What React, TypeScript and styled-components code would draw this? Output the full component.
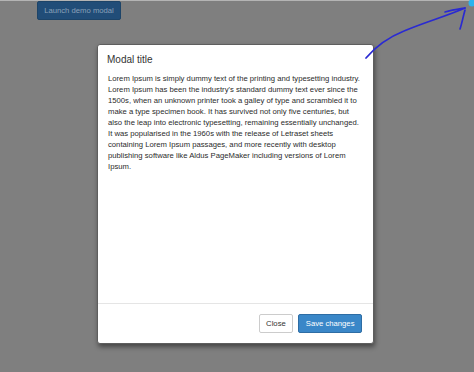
import React from "react";
import styled, { createGlobalStyle } from "styled-components";

const GlobalStyle = createGlobalStyle`
  html, body { margin: 0; padding: 0; }
  body {
    background: #7f7f7f;
    font-family: "Liberation Sans", Arial, sans-serif;
    color: #333;
    overflow: hidden;
  }
`;

const Page = styled.div`
  position: relative;
  width: 474px;
  height: 372px;
  background: #7f7f7f;
  overflow: hidden;
`;

const TopStrip = styled.div`
  height: 1px;
  background: #b4b4b4;
`;

const Toolbar = styled.div`
  display: flex;
  padding-left: 37px;
`;

const LaunchButton = styled.button`
  height: 19px;
  width: 84px;
  padding: 0;
  border: 1px solid #1d4468;
  border-radius: 2px;
  background: #214d78;
  color: #8aa1b8;
  font-family: "Liberation Sans", Arial, sans-serif;
  font-size: 7.7px;
  line-height: 11px;
  cursor: pointer;
`;

const Dialog = styled.div`
  box-sizing: border-box;
  margin: 24px 0 0 97px;
  width: 277px;
  height: 300px;
  display: flex;
  flex-direction: column;
  background: #fff;
  border: 1px solid #5e5e5e;
  border-radius: 3px;
  box-shadow: 1px 3px 5px rgba(0, 0, 0, 0.45);
`;

const Header = styled.div`
  padding: 9px 9px 0 9px;
`;

const Title = styled.h4`
  margin: 0;
  font-size: 10px;
  line-height: 11px;
  font-weight: 400;
  color: #333;
`;

const Body = styled.div`
  flex: 1;
  padding: 8px 10px;
  font-size: 7.7px;
  line-height: 11px;
  color: #2b2b2b;
`;

const Footer = styled.div`
  display: flex;
  justify-content: flex-end;
  gap: 5px;
  padding: 10px 11px 10px;
  border-top: 1px solid #e5e5e5;
`;

const Btn = styled.button<{ $primary?: boolean }>`
  box-sizing: border-box;
  height: 19px;
  padding: 0 6.5px;
  border-radius: 2px;
  font-family: "Liberation Sans", Arial, sans-serif;
  font-size: 7.7px;
  line-height: 11px;
  cursor: pointer;
  border: 1px solid ${(p) => (p.$primary ? "#2e6da4" : "#ccc")};
  background: ${(p) => (p.$primary ? "#3a87c8" : "#fff")};
  color: ${(p) => (p.$primary ? "#fff" : "#333")};
`;

const Annotation = styled.svg`
  position: absolute;
  left: 0;
  top: 0;
  pointer-events: none;
`;

export default function App() {
  return (
    <>
      <GlobalStyle />
      <Page>
        <TopStrip />
        <Toolbar>
          <LaunchButton>Launch demo modal</LaunchButton>
        </Toolbar>
        <Dialog>
          <Header>
            <Title>Modal title</Title>
          </Header>
          <Body>
            Lorem Ipsum is simply dummy text of the printing and typesetting
            industry. Lorem Ipsum has been the industry's standard dummy text
            ever since the 1500s, when an unknown printer took a galley of type
            and scrambled it to make a type specimen book. It has survived not
            only five centuries, but also the leap into electronic typesetting,
            remaining essentially unchanged. It was popularised in the 1960s
            with the release of Letraset sheets containing Lorem Ipsum
            passages, and more recently with desktop publishing software like
            Aldus PageMaker including versions of Lorem Ipsum.
          </Body>
          <Footer>
            <Btn>Close</Btn>
            <Btn $primary>Save changes</Btn>
          </Footer>
        </Dialog>
        <Annotation width="474" height="372" viewBox="0 0 474 372">
          <g fill="none" stroke="#2a2ad2" strokeWidth="1.7" strokeLinecap="round">
            <path d="M366 58 C 377 45, 389 37, 404 31 C 425 22, 447 16, 465 8" />
            <path d="M445 12 C 452 10, 459 9, 465 8" />
            <path d="M465 10 C 463 17, 462 23, 460 29" />
          </g>
          <circle cx="472" cy="3" r="3.5" fill="#2bb4ef" />
        </Annotation>
      </Page>
    </>
  );
}
